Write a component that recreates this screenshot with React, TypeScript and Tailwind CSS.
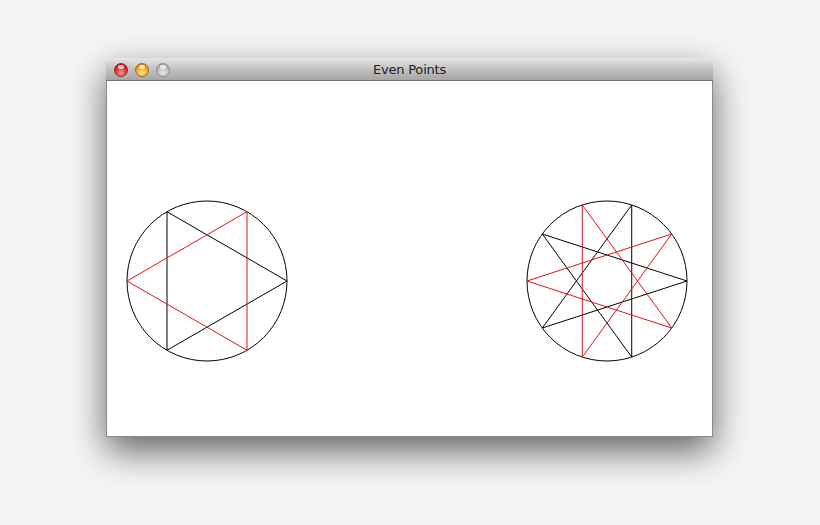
const R = 80;

function pt(cx: number, cy: number, deg: number) {
  const a = (deg * Math.PI) / 180;
  return `${(cx + R * Math.cos(a)).toFixed(2)},${(cy - R * Math.sin(a)).toFixed(2)}`;
}

function Star({ cx, cy, angles, color }: { cx: number; cy: number; angles: number[]; color: string }) {
  return (
    <polygon
      points={angles.map((d) => pt(cx, cy, d)).join(" ")}
      fill="none"
      stroke={color}
      strokeWidth={1}
    />
  );
}

function Light({ kind }: { kind: "red" | "yellow" | "gray" }) {
  const bg =
    kind === "red"
      ? "bg-[radial-gradient(circle_at_50%_75%,#ff9a9a_0%,#e2272b_55%,#9c1014_100%)] border-[#8a2a2a]"
      : kind === "yellow"
        ? "bg-[radial-gradient(circle_at_50%_75%,#ffe58a_0%,#f0a51e_55%,#a86608_100%)] border-[#9a6a20]"
        : "bg-[radial-gradient(circle_at_50%_75%,#e6e6e6_0%,#bdbdbd_55%,#909090_100%)] border-[#8c8c8c]";
  return (
    <div className={`relative w-[14px] h-[14px] rounded-full border ${bg}`}>
      <div className="absolute left-[3px] top-[1px] w-[6px] h-[4px] rounded-full bg-white/70" />
    </div>
  );
}

export default function App() {
  return (
    <main className="w-[820px] h-[525px] bg-[#f5f5f5] pt-[58px] pl-[106px] overflow-hidden">
      <div className="w-[607px] h-[379px] flex flex-col rounded-t-[4px] shadow-[0_14px_36px_rgba(0,0,0,0.6)]">
        <div className="relative h-[23px] flex items-center px-[8px] pt-[1px] gap-[7px] rounded-t-[4px] border-b border-[#6e6e6e] bg-[linear-gradient(to_bottom,#e6e6e6,#c2c2c2_50%,#a6a6a6)]">
          <Light kind="red" />
          <Light kind="yellow" />
          <Light kind="gray" />
          <div className="absolute inset-0 pt-[1px] flex items-center justify-center text-[13px] text-[#222] font-['Lucida_Grande','DejaVu_Sans',sans-serif] tracking-[-0.2px]">
            Even Points
          </div>
        </div>
        <div className="flex-1 bg-white border-x border-b border-[#8a8a8a]">
          <svg width="605" height="355" viewBox="0 0 605 355" className="block">
            <circle cx={100} cy={200} r={R} fill="none" stroke="#000" strokeWidth={1} />
            <Star cx={100} cy={200} angles={[0, 120, 240]} color="#000" />
            <Star cx={100} cy={200} angles={[60, 180, 300]} color="#e0141a" />
            <circle cx={500} cy={200} r={R} fill="none" stroke="#000" strokeWidth={1} />
            <Star cx={500} cy={200} angles={[0, 144, 288, 72, 216]} color="#000" />
            <Star cx={500} cy={200} angles={[36, 180, 324, 108, 252]} color="#e0141a" />
          </svg>
        </div>
      </div>
    </main>
  );
}
